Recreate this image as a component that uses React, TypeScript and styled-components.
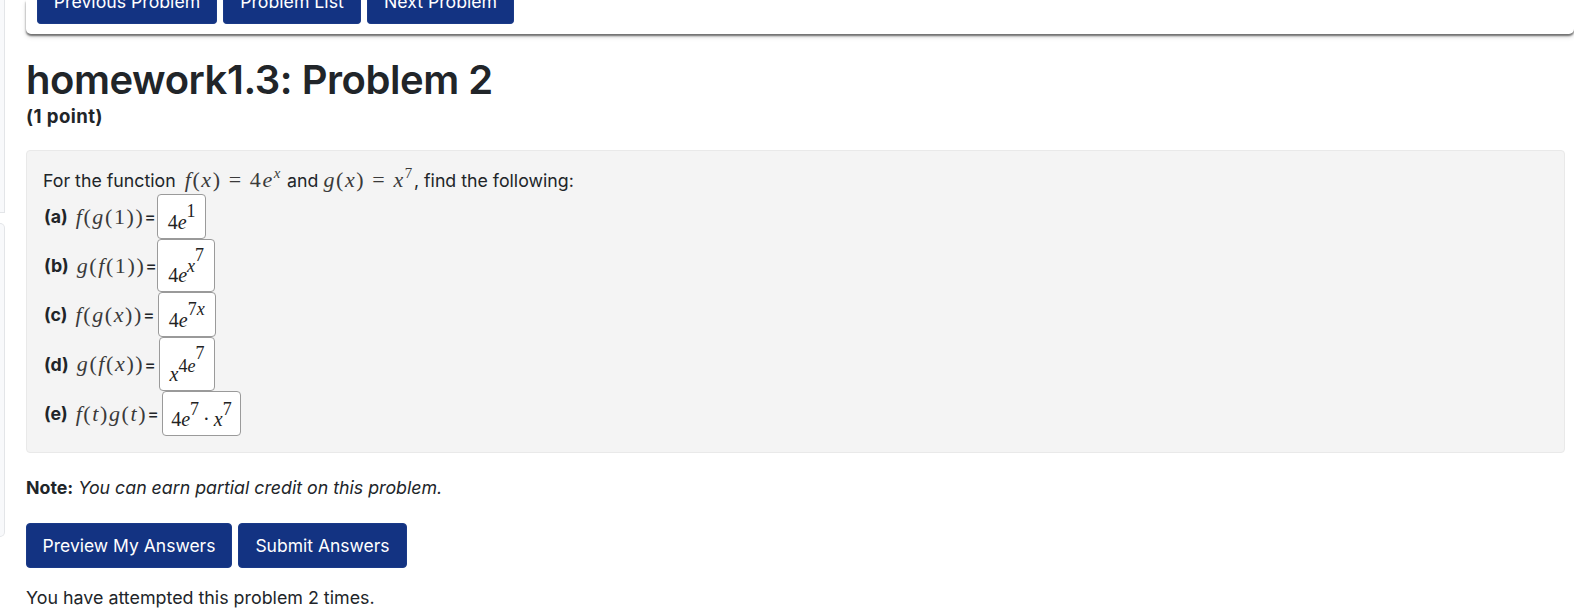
import React from "react";
import styled, { createGlobalStyle } from "styled-components";

const GlobalStyle = createGlobalStyle`
  html, body {
    margin: 0;
    padding: 0;
    background: #fff;
    overflow: hidden;
  }
  body {
    font-family: Inter, "Liberation Sans", sans-serif;
    color: #212529;
    font-size: 17.75px;
  }
`;

const Page = styled.div`
  display: flex;
  height: 614px;
  overflow: hidden;
`;

const SideRail = styled.aside`
  width: 5px;
  flex: none;
  display: flex;
  flex-direction: column;
`;

const RailTop = styled.div`
  height: 212px;
  background: #f8f9fb;
  border-right: 1px solid #e3e5e8;
  border-bottom: 1px solid #e3e5e8;
`;

const RailBottom = styled.div`
  height: 312px;
  margin-top: 10px;
  background: #f8f9fb;
  border: 1px solid #e3e5e8;
  border-left: 0;
  border-radius: 0 8px 8px 0;
`;

const Main = styled.main`
  flex: 1;
  min-width: 0;
  padding: 0 9px 0 21px;
`;

const NavCard = styled.nav`
  display: flex;
  gap: 6px;
  height: 34px;
  padding: 0 11px;
  background: #fff;
  border-radius: 0 0 5px 5px;
  box-shadow: 0 2px 2px #6f6f6f, 0 3px 5px rgba(0, 0, 0, 0.14);
  margin-right: -9px;
  box-sizing: border-box;
`;

const Button = styled.button<{ $width: number }>`
  width: ${(p) => p.$width}px;
  height: 45px;
  flex: none;
  padding: 0;
  background: #133382;
  color: #fff;
  border: 1px solid #1a3a88;
  border-radius: 4px;
  font-family: inherit;
  font-size: 17.5px;
  line-height: 1;
`;

const NavButton = styled(Button)`
  height: 24px;
  border-top: 0;
  border-radius: 0 0 4px 4px;
  line-height: 3px;
  padding-bottom: 20px;
  box-sizing: border-box;
  font-size: 17.7px;
`;

const Title = styled.h1`
  margin: 22px 0 0;
  font-size: 40px;
  line-height: 48px;
  font-weight: 600;
  letter-spacing: -0.45px;
`;

const Points = styled.div`
  font-size: 18.6px;
  line-height: 24px;
  font-weight: 700;
  letter-spacing: 0.45px;
`;

const ProblemBox = styled.section`
  margin-top: 22px;
  height: 303px;
  padding: 16px 16px 0;
  box-sizing: border-box;
  background: #f4f4f4;
  border: 1px solid #e9e9e9;
  border-radius: 4px;
`;

const Intro = styled.div`
  line-height: 26px;
  height: 27px;
  white-space: nowrap;
`;

const Formula = styled.span<{ $inset?: number }>`
  margin-left: ${(p) => p.$inset ?? 0}px;
  font-family: "Liberation Serif", serif;
  font-size: 22px;
  letter-spacing: 1.6px;
  color: #3a3a3a;
`;

const Var = styled.i`
  font-family: "Liberation Serif", serif;
`;

const Sup = styled.sup`
  font-size: 0.68em;
  line-height: 0;
  vertical-align: 0.62em;
`;

const AnswerRow = styled.div<{ $height: number }>`
  display: flex;
  align-items: center;
  height: ${(p) => p.$height}px;
  white-space: nowrap;
`;

const Label = styled.b`
  margin: 0 8px 0 1px;
`;

const AnswerBox = styled.span<{ $width: number; $gap: number }>`
  display: flex;
  align-items: flex-end;
  justify-content: center;
  box-sizing: border-box;
  width: ${(p) => p.$width}px;
  height: 100%;
  padding-bottom: 5px;
  margin-left: ${(p) => p.$gap}px;
  background: #fff;
  border: 1px solid #9a9a9a;
  border-radius: 4px;
  font-family: "Liberation Serif", serif;
  font-size: 20px;
  line-height: 22px;
  color: #222;
`;

const AnswerValue = styled.span``;

const BoxSup = styled.sup<{ $raise: number }>`
  font-size: 18px;
  line-height: 0;
  vertical-align: ${(p) => p.$raise}px;
`;

const Note = styled.p`
  margin: 23px 0 0;
  line-height: 24px;
`;

const Actions = styled.div`
  display: flex;
  gap: 6px;
  margin-top: 23px;
`;

const Attempts = styled.p`
  margin: 18px 0 0;
  line-height: 24px;
  font-size: 17.85px;
`;

const answers = [
  { label: "(a)", expr: <><Var>f</Var>(<Var>g</Var>(1))</>, width: 49, height: 45, gap: 1, value: <>4<Var>e</Var><BoxSup $raise={12}>1</BoxSup></> },
  { label: "(b)", expr: <><Var>g</Var>(<Var>f</Var>(1))</>, width: 58, height: 53, gap: 0, value: <>4<Var>e</Var><BoxSup $raise={10}><Var>x</Var><BoxSup $raise={11}>7</BoxSup></BoxSup></> },
  { label: "(c)", expr: <><Var>f</Var>(<Var>g</Var>(<Var>x</Var>))</>, width: 58, height: 45, gap: 3, value: <>4<Var>e</Var><BoxSup $raise={12}>7<Var>x</Var></BoxSup></> },
  { label: "(d)", expr: <><Var>g</Var>(<Var>f</Var>(<Var>x</Var>))</>, width: 56, height: 54, gap: 3, value: <><Var>x</Var><BoxSup $raise={9}>4<Var>e</Var><BoxSup $raise={13}>7</BoxSup></BoxSup></> },
  { label: "(e)", expr: <><Var>f</Var>(<Var>t</Var>)<Var>g</Var>(<Var>t</Var>)</>, width: 79, height: 45, gap: 3, value: <>4<Var>e</Var><BoxSup $raise={11}>7</BoxSup>{"\u2009·\u2009"}<Var>x</Var><BoxSup $raise={11}>7</BoxSup></> },
];

export default function App() {
  return (
    <>
      <GlobalStyle />
      <Page>
        <SideRail>
          <RailTop />
          <RailBottom />
        </SideRail>
        <Main>
          <NavCard>
            <NavButton $width={180}>Previous Problem</NavButton>
            <NavButton $width={138}>Problem List</NavButton>
            <NavButton $width={147}>Next Problem</NavButton>
          </NavCard>
          <Title>homework1.3: Problem 2</Title>
          <Points>(1 point)</Points>
          <ProblemBox>
            <Intro>
              For the function <Formula $inset={4}><Var>f</Var>(<Var>x</Var>) = 4<Var>e</Var><Sup><Var>x</Var></Sup></Formula> and{" "}
              <Formula><Var>g</Var>(<Var>x</Var>) = <Var>x</Var><Sup>7</Sup></Formula>, find the following:
            </Intro>
            {answers.map((a) => (
              <AnswerRow key={a.label} $height={a.height}>
                <Label>{a.label}</Label>
                <Formula>{a.expr}</Formula>=
                <AnswerBox $width={a.width} $gap={a.gap}>
                  <AnswerValue>{a.value}</AnswerValue>
                </AnswerBox>
              </AnswerRow>
            ))}
          </ProblemBox>
          <Note>
            <b>Note:</b> <i>You can earn partial credit on this problem.</i>
          </Note>
          <Actions>
            <Button $width={206}>Preview My Answers</Button>
            <Button $width={169}>Submit Answers</Button>
          </Actions>
          <Attempts>You have attempted this problem 2 times.</Attempts>
        </Main>
      </Page>
    </>
  );
}
